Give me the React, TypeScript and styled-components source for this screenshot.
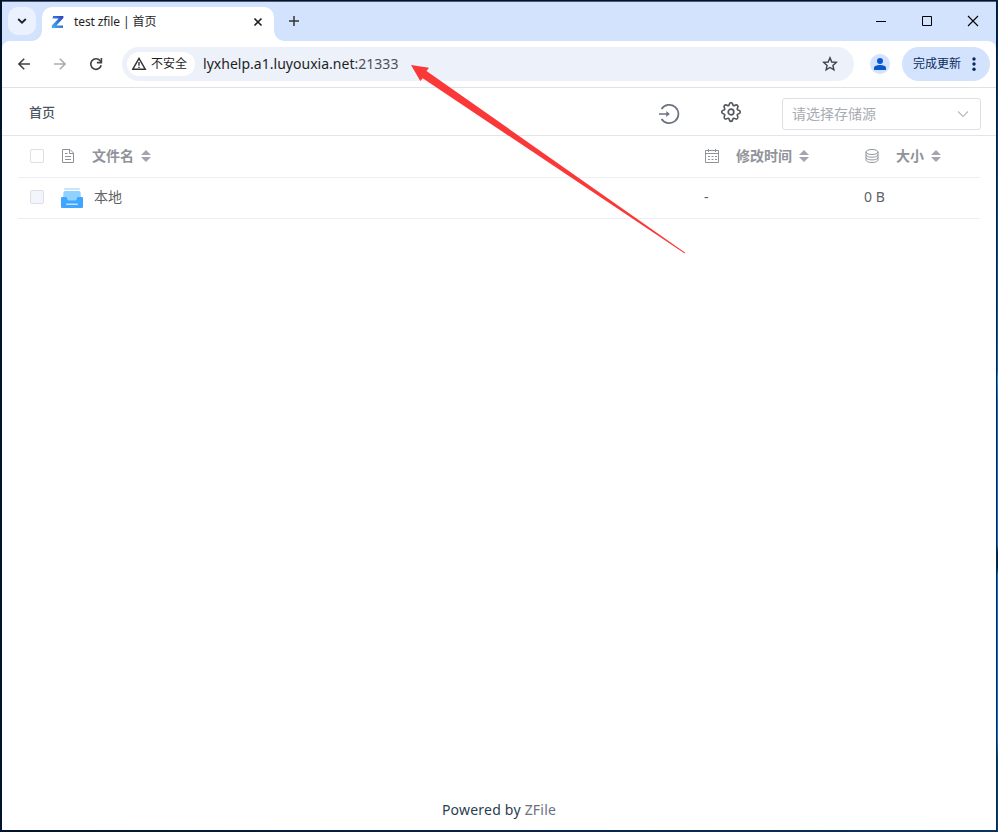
import React from "react";
import styled, { createGlobalStyle } from "styled-components";

const GlobalStyle = createGlobalStyle`
  * { box-sizing: border-box; }
  body { margin: 0; overflow: hidden; font-family: "Noto Sans", "Noto Sans CJK SC", sans-serif; }
  svg { display: block; flex: none; }
`;

const Desktop = styled.div`
  width: 998px;
  height: 832px;
  padding: 1px 2px 2px;
  background: linear-gradient(#031a35, #062a52) right / 2px 100% no-repeat,
    linear-gradient(90deg, #02142b, #0b3260) bottom / 100% 2px no-repeat, #02142b;
`;
const DesktopEdge = styled.div`
  position: absolute;
  left: 997px;
  top: 0;
  width: 1px;
  height: 832px;
  background: linear-gradient(#03234a 0px, #064a8c 230px, #0a66c4 370px, #0b9bf0 378px, #0a72d8 400px, #0a72d8 545px, #06253f 552px, #06253f 567px, #0a72d8 575px, #0a78d8 740px, #07406f 760px, #0a3a68 832px);
`;
const Window = styled.div`
  display: flex;
  flex-direction: column;
  width: 994px;
  height: 829px;
  background: #d3e3fd;
  border-top: 1px solid #4d5a70;
`;
const TabStrip = styled.div`
  display: flex;
  height: 39px;
  padding: 5px 0 0 6px;
`;
const TabSearch = styled.div`
  display: grid;
  place-items: center;
  width: 28px;
  height: 28px;
  margin-right: 6px;
  border-radius: 10px;
  background: #ebf2fe;
`;
const Tab = styled.div`
  position: relative;
  display: flex;
  align-items: center;
  width: 232px;
  height: 34px;
  padding: 0 10px 5px 9px;
  border-radius: 10px 10px 0 0;
  background: #fff;
  &::before, &::after {
    content: "";
    position: absolute;
    bottom: 0;
    width: 10px;
    height: 10px;
  }
  &::before { left: -10px; background: radial-gradient(circle at 0 0, transparent 9.5px, #fff 10px); }
  &::after { right: -10px; background: radial-gradient(circle at 100% 0, transparent 9.5px, #fff 10px); }
`;
const Text = styled.span<{ $size: number; $color: string; $spacing?: number; $weight?: number; $line?: number }>`
  font-size: ${(p) => p.$size}px;
  line-height: ${(p) => p.$line ?? 20}px;
  color: ${(p) => p.$color};
  letter-spacing: ${(p) => p.$spacing ?? 0}px;
  font-weight: ${(p) => p.$weight ?? 400};
  white-space: pre;
`;
const TabTitle = styled(Text)`
  flex: 1;
  margin-left: 9px;
`;
const NewTab = styled.div`
  margin: 8px 0 0 14px;
`;
const WindowControls = styled.div`
  display: flex;
  gap: 34px;
  margin: 8px 17px 0 auto;
`;
const Toolbar = styled.div`
  display: flex;
  align-items: center;
  height: 47px;
  padding: 0 6px 0 14px;
  border-radius: 8px 8px 0 0;
  border-bottom: 1px solid #dfe1e5;
  background: #fff;
`;
const NavIcons = styled.div`
  display: flex;
  gap: 20px;
  width: 106px;
`;
const AddressBar = styled.div`
  display: flex;
  align-items: center;
  width: 732px;
  height: 34px;
  padding: 0 16px 0 5px;
  border-radius: 17px;
  background: #ecf1fa;
`;
const SecurityChip = styled.div`
  display: flex;
  align-items: center;
  gap: 4px;
  width: 68px;
  height: 24px;
  padding-left: 5px;
  border-radius: 12px;
  background: #fff;
`;
const Address = styled(Text)`
  flex: 1;
  margin-left: 8px;
`;
const Port = styled.span`
  color: #4c5056;
`;
const Avatar = styled.div`
  display: grid;
  place-items: center;
  width: 20px;
  height: 20px;
  margin: 0 12px 0 16px;
  border-radius: 50%;
  background: #d3e3fd;
`;
const UpdateButton = styled.div`
  display: flex;
  align-items: center;
  justify-content: space-between;
  width: 88px;
  height: 34px;
  padding: 0 14px 0 11px;
  border-radius: 17px;
  background: #d3e3fd;
`;
const Page = styled.div`
  display: flex;
  flex: 1;
  flex-direction: column;
  background: #fff;
`;
const PageHeader = styled.div`
  display: flex;
  align-items: center;
  height: 48px;
  padding: 0 15px 0 27px;
  border-bottom: 1px solid #e4e5e9;
`;
const HeaderActions = styled.div`
  display: flex;
  align-items: center;
  margin-left: auto;
`;
const LoginIcon = styled.svg`
  margin: 4px 40px 0 0;
`;
const SettingsIcon = styled.svg`
  margin: 0 40px 0 0;
`;
const Select = styled.div`
  display: flex;
  align-items: center;
  justify-content: space-between;
  width: 199px;
  height: 32px;
  margin-top: 4px;
  padding: 0 11px 0 9px;
  border: 1px solid #dcdfe6;
  border-radius: 3px;
`;
const Table = styled.div`
  margin: 0 16px;
`;
const Row = styled.div<{ $height: number }>`
  display: grid;
  grid-template-columns: 44px 642px 160px 1fr;
  align-items: center;
  height: ${(p) => p.$height}px;
  padding-bottom: 2px;
  border-bottom: 1px solid #ebeef5;
`;
const Cell = styled.div<{ $gap?: number }>`
  display: flex;
  align-items: center;
  gap: ${(p) => p.$gap ?? 0}px;
`;
const HeadLabel = styled(Text)`
  margin-right: 7px;
`;
const FolderCell = styled(Cell)`
  margin-left: -1px;
`;
const FolderIcon = styled.svg`
  margin-top: 2px;
`;
const Checkbox = styled.div<{ $disabled?: boolean }>`
  width: 14px;
  height: 14px;
  margin-left: 12px;
  border: 1px solid #dcdfe6;
  border-radius: 2px;
  background: ${(p) => (p.$disabled ? "#f2f6fc" : "#fff")};
`;
const Footer = styled.div`
  margin-top: auto;
  padding-bottom: 10px;
  text-align: center;
`;
const ZFileLink = styled.span`
  color: #6b7280;
`;
const Arrow = styled.svg`
  position: absolute;
  left: 0;
  top: 0;
`;

const Sorter = () => (
  <svg width="10" height="12" viewBox="0 0 10 12" fill="#a3a6ad">
    <path d="M0 5 5 0l5 5zM0 7h10l-5 5z" />
  </svg>
);

export default function App() {
  return (
    <>
      <GlobalStyle />
      <Desktop>
        <Window>
          <TabStrip>
            <TabSearch>
              <svg width="10" height="8" viewBox="0 0 10 8" fill="none" stroke="#202124" strokeWidth="1.8">
                <path d="m1.2 2 3.8 3.7L8.8 2" />
              </svg>
            </TabSearch>
            <Tab>
              <svg width="14" height="14" viewBox="0 0 14 14">
                <defs>
                  <linearGradient id="z" x1="0" y1="1" x2="1" y2="0">
                    <stop offset="0" stopColor="#42b5ed" />
                    <stop offset=".55" stopColor="#3675d5" />
                    <stop offset="1" stopColor="#303bb5" />
                  </linearGradient>
                </defs>
                <path fill="url(#z)" d="M2 1h10.400v2L5.500 10.500H12V13H.8v-2.400L7.700 3.500H1.500z" />
              </svg>
              <TabTitle $size={12} $color="#1f1f1f" $spacing={-0.1}>test zfile | 首页</TabTitle>
              <svg width="12" height="12" viewBox="0 0 12 12" stroke="#1f1f1f" strokeWidth="1.6">
                <path d="m2.5 2.5 7 7m0-7-7 7" />
              </svg>
            </Tab>
            <NewTab>
              <svg width="12" height="12" viewBox="0 0 12 12" stroke="#333" strokeWidth="1.5">
                <path d="M6 1v10M1 6h10" />
              </svg>
            </NewTab>
            <WindowControls>
              <svg width="12" height="12" viewBox="0 0 12 12" stroke="#000"><path d="M1 6.5h10" /></svg>
              <svg width="12" height="12" viewBox="0 0 12 12" fill="none" stroke="#000"><path d="M1.5 1.5h9v9h-9z" /></svg>
              <svg width="12" height="12" viewBox="0 0 12 12" stroke="#000" strokeWidth="1.1"><path d="m1 1 10 10m0-10L1 11" /></svg>
            </WindowControls>
          </TabStrip>
          <Toolbar>
            <NavIcons>
              <svg width="16" height="16" viewBox="0 0 16 16" fill="none" stroke="#3f4246" strokeWidth="1.6">
                <path d="M14 8H3M8.2 2.7 2.9 8l5.3 5.3" />
              </svg>
              <svg width="16" height="16" viewBox="0 0 16 16" fill="none" stroke="#aaacaf" strokeWidth="1.6">
                <path d="M2 8h11M7.8 2.7 13.1 8l-5.3 5.3" />
              </svg>
              <svg width="16" height="16" viewBox="0 0 16 16" fill="none" stroke="#3f4246" strokeWidth="1.6">
                <path d="M13.2 9.3A5.3 5.3 0 1 1 12.2 4.7L13.4 6" />
                <path d="M13.4 2v4.6H8.9" />
              </svg>
            </NavIcons>
            <AddressBar>
              <SecurityChip>
                <svg width="15" height="14" viewBox="0 0 15 14" fill="none" stroke="#333" strokeWidth="1.4">
                  <path d="M7 1.3 13.300 12.3H.700zM7 5v3.700M7 9.7v1.3" />
                </svg>
                <Text $size={12} $color="#1f1f1f">不安全</Text>
              </SecurityChip>
              <Address $size={14} $color="#1f1f1f" $spacing={0.02}>lyxhelp.a1.luyouxia.net<Port>:21333</Port></Address>
              <svg width="16" height="16" viewBox="0 0 16 16" fill="none" stroke="#3f4246" strokeWidth="1.4">
                <path d="m8 1.8 1.8 4.2 4.5.4-3.4 3 1 4.4L8 11.5l-3.9 2.3 1-4.4-3.4-3L6.2 6z" />
              </svg>
            </AddressBar>
            <Avatar>
              <svg width="12" height="12" viewBox="0 0 12 12" fill="#0b57d0">
                <circle cx="6" cy="3" r="3" />
                <path d="M0 12V9.800C0 7.800 3.700 7 6 7s6 .8 6 2.800V12z" />
              </svg>
            </Avatar>
            <UpdateButton>
              <Text $size={12} $color="#0b2a5c" $line={22}>完成更新</Text>
              <svg width="4" height="16" viewBox="0 0 4 16" fill="#0b2a5c">
                <circle cx="2" cy="3" r="1.7" /><circle cx="2" cy="8" r="1.7" /><circle cx="2" cy="13.3" r="1.7" />
              </svg>
            </UpdateButton>
          </Toolbar>
          <Page>
            <PageHeader>
              <Text $size={13} $weight={500} $color="#4b5563" $line={22}>首页</Text>
              <HeaderActions>
                <LoginIcon width="22" height="22" viewBox="0 0 22 22" fill="none" stroke="#6b7280" strokeWidth="1.7">
                  <path d="M3.5 6A9.2 9.2 0 1 1 3.5 16M1 11h9" />
                  <path d="M8.3 8.1 11.8 11l-3.5 2.9z" fill="#6b7280" stroke="none" />
                </LoginIcon>
                <SettingsIcon width="22" height="22" viewBox="0 0 22 22" fill="none" stroke="#55585e" strokeWidth="1.7" strokeLinejoin="round">
                  <circle cx="11" cy="11" r="2.8" />
                  <path d="M11 1.7c1.5 0 1.600.8 1.900 2.200.2.700 1 1 1.600.6 1.300-.8 2-1.200 3-.1 1 1 .7 1.700-.1 2.900-.4.700 0 1.500.7 1.700 1.400.3 2.200.500 2.200 2s-.8 1.700-2.200 2c-.7.200-1.100 1-.7 1.600.8 1.300 1.100 1.900.1 2.900s-1.700.7-3-.1c-.6-.4-1.400 0-1.600.7-.3 1.400-.4 2.200-1.900 2.200s-1.600-.8-1.900-2.200c-.2-.7-1-1.100-1.600-.7-1.300.8-2 1.100-3 .1s-.7-1.600.1-2.900c.4-.6 0-1.400-.7-1.600-1.400-.3-2.200-.5-2.200-2s.8-1.700 2.200-2c.7-.2 1.100-1 .7-1.700-.8-1.200-1.100-1.900-.1-2.900 1-1.100 1.700-.7 3 .1.600.4 1.400.1 1.600-.6.3-1.400.4-2.200 1.900-2.200z" />
                </SettingsIcon>
                <Select>
                  <Text $size={14} $color="#a8abb2">请选择存储源</Text>
                  <svg width="12" height="12" viewBox="0 0 12 12" fill="none" stroke="#b6b9bf" strokeWidth="1.1"><path d="m1 3.5 5 5 5-5" /></svg>
                </Select>
              </HeaderActions>
            </PageHeader>
            <Table>
              <Row $height={42}>
                <Checkbox />
                <Cell>
                  <Cell $gap={18}>
                    <svg width="12" height="14" viewBox="0 0 12 14" fill="none" stroke="#8d9096">
                      <path d="M.5.5H8l3.500 3.500v9.500H.5zM7.500.5v4h4M3 4.500h2.500M3 7.500h6M3 10.500h6" />
                    </svg>
                    <HeadLabel $size={14} $weight={700} $color="#909399">文件名</HeadLabel>
                  </Cell>
                  <Sorter />
                </Cell>
                <Cell>
                  <Cell $gap={17}>
                    <svg width="15" height="14" viewBox="0 0 15 14" fill="none" stroke="#909399">
                      <path d="M1.500 1.500h13v12h-13zM1.500 4.500h13M4.500 0v3M11.500 0v3" />
                      <path d="M4 7.500h9M4 10.500h9" strokeDasharray="2 1.500" />
                    </svg>
                    <HeadLabel $size={14} $weight={700} $color="#909399">修改时间</HeadLabel>
                  </Cell>
                  <Sorter />
                </Cell>
                <Cell>
                  <Cell $gap={17}>
                    <svg width="15" height="14" viewBox="0 0 15 14" fill="none" stroke="#909399">
                      <ellipse cx="8" cy="3" rx="6" ry="2.5" />
                      <path d="M2 3v8c0 1.400 2.700 2.500 6 2.500s6-1.100 6-2.500V3M2 5.700c0 1.400 2.700 2.500 6 2.500s6-1.100 6-2.500M2 8.400c0 1.400 2.700 2.500 6 2.500s6-1.100 6-2.500" />
                    </svg>
                    <HeadLabel $size={14} $weight={700} $color="#909399">大小</HeadLabel>
                  </Cell>
                  <Sorter />
                </Cell>
              </Row>
              <Row $height={41}>
                <Checkbox $disabled />
                <FolderCell $gap={11}>
                  <FolderIcon width="22" height="20" viewBox="0 0 22 20">
                    <rect x="3" width="16" height="2" rx="1" fill="#c4e7ff" />
                    <path fill="#8fd1ff" d="M4 3h14q1.500 0 1.600 1.500L20 14H2l.4-9.500Q2.500 3 4 3z" />
                    <path fill="#40a5ff" d="M1 9h4q1 0 1 1c0 1.600.8 2.500 2 2.500h6c1.200 0 2-.9 2-2.500q0-1 1-1h4q1 0 1 1v9q0 1-1 1H1q-1 0-1-1v-9q0-1 1-1z" />
                    <rect x="5" y="15.5" width="12" height="1.5" rx=".7" fill="#b9e2ff" />
                  </FolderIcon>
                  <Text $size={14} $color="#606266">本地</Text>
                </FolderCell>
                <Text $size={14} $color="#606266">-</Text>
                <Text $size={14} $color="#606266">0 B</Text>
              </Row>
            </Table>
            <Footer>
              <Text $size={14} $color="#2c3e50" $spacing={0.22}>Powered by <ZFileLink>ZFile</ZFileLink></Text>
            </Footer>
          </Page>
        </Window>
      </Desktop>
      <DesktopEdge />
      <Arrow width="998" height="260" viewBox="0 0 998 260" fill="#fb3838">
        <path d="m411 65 18 2.700-2.500 3.300L685.300 252.700l-.6.700L422.700 78.300l-2.400 2.700z" />
      </Arrow>
    </>
  );
}
